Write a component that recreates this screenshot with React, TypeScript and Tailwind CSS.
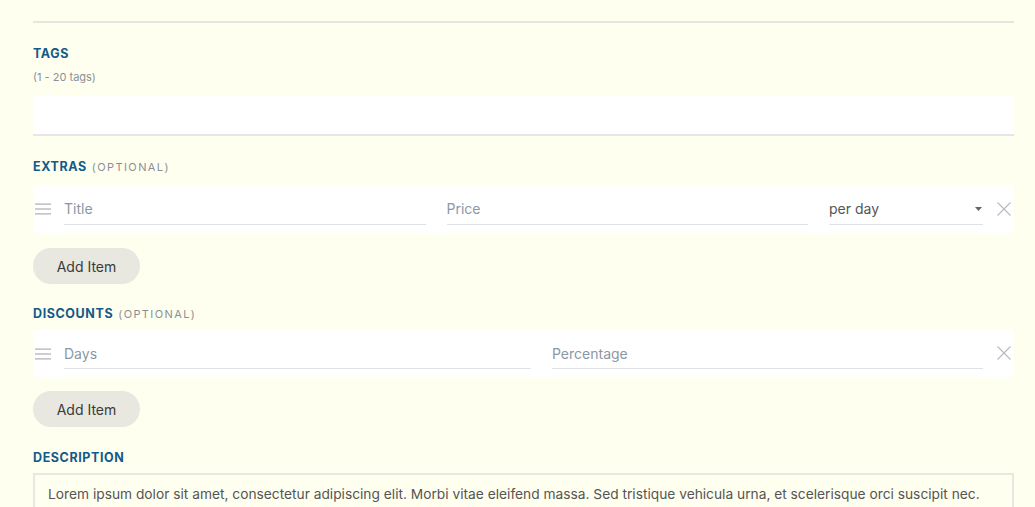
const Label = ({ text, optional }: { text: string; optional?: boolean }) => (
  <p className="text-[12.5px] leading-4 font-bold tracking-[0.6px] text-[#135a86]">
    {text}
    {optional && (
      <span className="ml-[5px] text-[11px] font-normal tracking-[1.4px] text-[#8b8f94]">
        (OPTIONAL)
      </span>
    )}
  </p>
);

const Handle = () => (
  <div className="w-[31px] shrink-0 pl-[2px]">
    <svg width="16" height="12" viewBox="0 0 16 12">
      <rect x="0" y="0.5" width="16" height="1.2" fill="#aab0b8" />
      <rect x="0" y="5.4" width="16" height="1.2" fill="#aab0b8" />
      <rect x="0" y="10.3" width="16" height="1.2" fill="#aab0b8" />
    </svg>
  </div>
);

const Field = ({ placeholder, className }: { placeholder: string; className?: string }) => (
  <div className={`h-[31px] border-b border-[#dbe2ea] flex items-center ${className ?? ""}`}>
    <span className="text-[14px] text-[#8a98a6]">{placeholder}</span>
  </div>
);

const Remove = () => (
  <div className="w-[31px] shrink-0 flex pl-[14px] pb-[1px]">
    <svg width="14" height="14" viewBox="0 0 14 14">
      <path d="M0.5 0.5 L13.5 13.5 M13.5 0.5 L0.5 13.5" stroke="#b4bac2" strokeWidth="1.1" />
    </svg>
  </div>
);

const AddButton = () => (
  <button className="w-[107px] h-[36px] rounded-full bg-[#e8e8e0] text-[14px] text-[#3a3a3a]">
    Add Item
  </button>
);

const App = () => {
  return (
    <div className="min-h-screen w-full bg-[#fffff0] pl-[33px] pr-[21px] pt-[21px] font-['Inter',sans-serif] overflow-hidden h-[507px]">
      <div className="h-[2px] bg-[#e6e6de]" />
      <div className="mt-[23px]">
        <Label text="TAGS" />
      </div>
      <p className="mt-[7px] text-[11px] leading-4 text-[#8b8f94]">(1 - 20 tags)</p>
      <div className="mt-[11px] h-[40px] bg-white border-b-2 border-[#e4e6ea]" />

      <div className="mt-[23px]">
        <Label text="EXTRAS" optional />
      </div>
      <div className="mt-[10px] h-[48px] bg-white flex items-center">
        <Handle />
        <div className="flex-1 flex gap-[21px] items-center">
          <Field placeholder="Title" className="flex-1" />
          <Field placeholder="Price" className="flex-1" />
          <div className="w-[154px] h-[31px] border-b border-[#dbe2ea] flex items-center justify-between pr-[1px]">
            <span className="text-[14px] text-[#555]">per day</span>
            <svg width="7" height="4" viewBox="0 0 7 4">
              <path d="M0 0 H7 L3.5 4 Z" fill="#666" />
            </svg>
          </div>
        </div>
        <Remove />
      </div>
      <div className="mt-[15px]">
        <AddButton />
      </div>

      <div className="mt-[22px]">
        <Label text="DISCOUNTS" optional />
      </div>
      <div className="mt-[8px] h-[47px] bg-white flex items-center">
        <Handle />
        <div className="flex-1 flex gap-[21px] items-center">
          <Field placeholder="Days" className="w-[467px]" />
          <Field placeholder="Percentage" className="flex-1" />
        </div>
        <Remove />
      </div>
      <div className="mt-[14px]">
        <AddButton />
      </div>

      <div className="mt-[23px]">
        <Label text="DESCRIPTION" />
      </div>
      <div className="mt-[7px] border-2 border-[#e8e8e2] bg-[#fffff0] px-[13px] pt-[9px] h-[60px]">
        <p className="text-[13.75px] text-[#555]">
          Lorem ipsum dolor sit amet, consectetur adipiscing elit. Morbi vitae eleifend massa. Sed tristique vehicula urna, et scelerisque orci suscipit nec.
        </p>
      </div>
    </div>
  );
};

export default App;
